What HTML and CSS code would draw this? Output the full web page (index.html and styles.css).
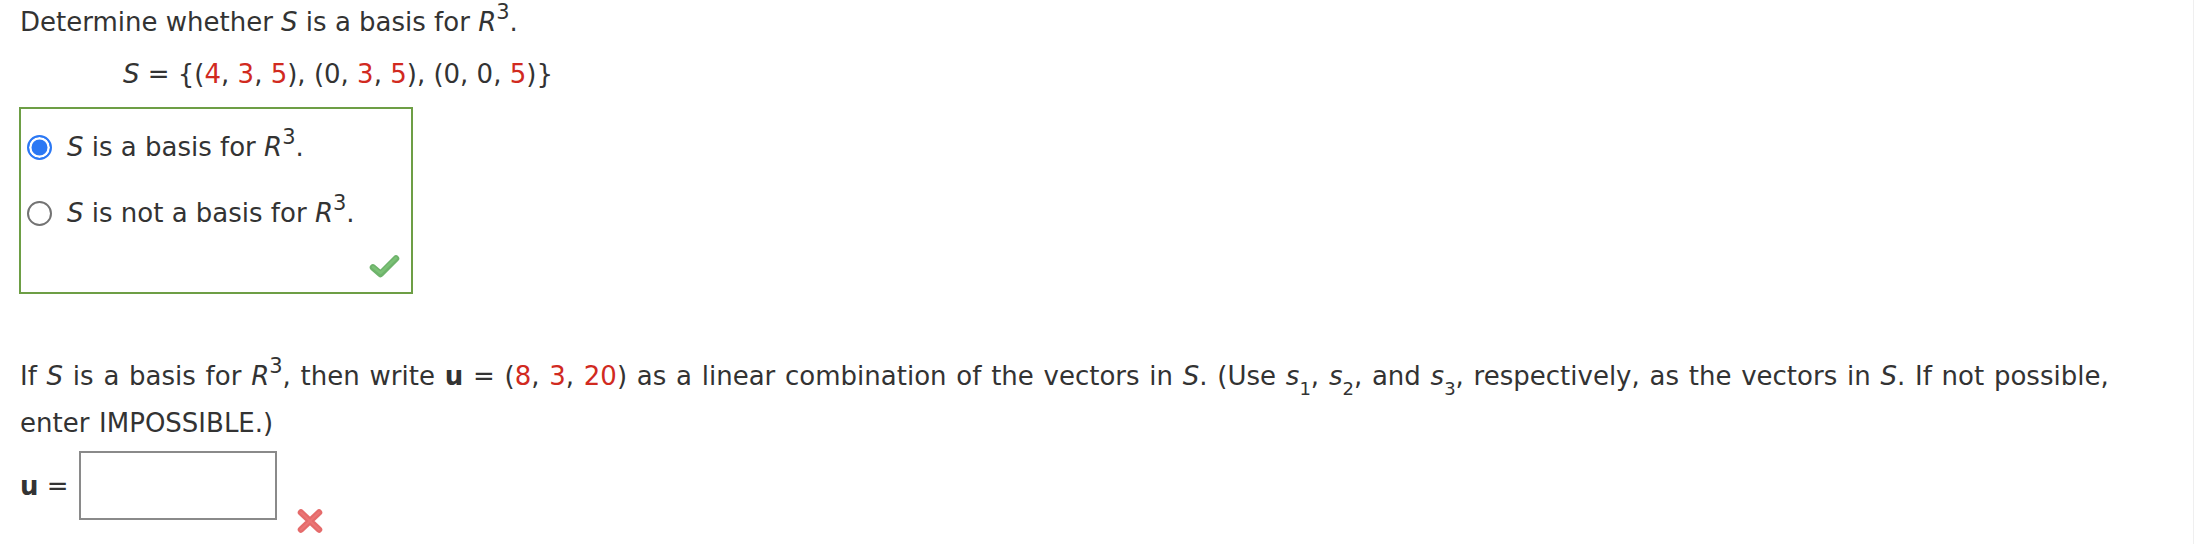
FILE: index.html
```html
<!DOCTYPE html>
<html>
<head>
<meta charset="utf-8">
<link rel="stylesheet" href="styles.css">
</head>
<body>
<div class="question">
  <p class="title">Determine whether <i>S</i> is a basis for <i>R</i><sup>3</sup>.</p>
  <p class="set"><i>S</i> = {(<span class="red">4</span>, <span class="red">3</span>, <span class="red">5</span>), (0, <span class="red">3</span>, <span class="red">5</span>), (0, 0, <span class="red">5</span>)}</p>
  <div class="answer-box">
    <div class="option">
      <span class="radio checked"></span>
      <span class="opt-text"><i>S</i> is a basis for <i>R</i><sup>3</sup>.</span>
    </div>
    <div class="option">
      <span class="radio"></span>
      <span class="opt-text"><i>S</i> is not a basis for <i>R</i><sup>3</sup>.</span>
    </div>
    <div class="mark-row">
      <svg class="check" width="31" height="24" viewBox="0 0 31 24">
        <path d="M4 13.5 L11.5 20 L27 4.5" fill="none" stroke="#5aa956" stroke-width="6.5" stroke-linecap="round" stroke-linejoin="round" opacity="0.88"/>
        <path d="M4 13 L11.5 19 L27 4" fill="none" stroke="#80c77a" stroke-width="2.5" stroke-linecap="round" stroke-linejoin="round" opacity="0.7"/>
      </svg>
    </div>
  </div>
  <p class="q2">If <i>S</i> is a basis for <i>R</i><sup>3</sup>, then write <b>u</b> = (<span class="red">8</span>, <span class="red">3</span>, <span class="red">20</span>) as a linear combination of the vectors in <i>S</i>. (Use <i>s</i><sub>1</sub>, <i>s</i><sub>2</sub>, and <i>s</i><sub>3</sub>, respectively, as the vectors in <i>S</i>. If not possible, enter IMPOSSIBLE.)</p>
  <div class="u-row">
    <span class="u-label"><b>u</b> =</span>
    <span class="input"></span>
    <svg class="cross" width="28" height="26" viewBox="0 0 28 26">
      <path d="M5 4.5 L23 21.5 M23 4.5 L5 21.5" fill="none" stroke="#e25b5b" stroke-width="6.5" stroke-linecap="round" opacity="0.9"/>
      <path d="M5 4.5 L23 21.5 M23 4.5 L5 21.5" fill="none" stroke="#ef7d7d" stroke-width="2" stroke-linecap="round" opacity="0.6"/>
    </svg>
  </div>
</div>
</body>
</html>
```

FILE: styles.css
```css
html, body {
  margin: 0;
  padding: 0;
  background: #ffffff;
}

.question {
  box-sizing: border-box;
  width: 2194px;
  height: 544px;
  padding-left: 20px;
  border-right: 1px solid #efefef;
  font-family: "DejaVu Sans", Verdana, sans-serif;
  font-size: 26px;
  color: #333333;
}

p {
  margin: 0;
}

i {
  font-style: italic;
}

sup {
  font-size: 21px;
  line-height: 0;
  vertical-align: 12px;
}

sub {
  font-size: 18px;
  line-height: 0;
  vertical-align: -10px;
}

.red {
  color: #d12a1f;
}

.title {
  line-height: 44px;
}

.set {
  margin-top: 8px;
  margin-left: 103px;
  line-height: 44px;
}

.answer-box {
  margin-top: 11px;
  margin-left: -1px;
  width: 390px;
  border: 2px solid #6d9e45;
  padding: 5px 0 14px 0;
}

.option {
  display: flex;
  align-items: center;
  height: 66px;
}

.radio {
  flex: none;
  width: 25px;
  height: 25px;
  box-sizing: border-box;
  border-radius: 50%;
  border: 2px solid #737373;
  background: #ffffff;
  margin-left: 6px;
  margin-right: 15px;
}

.radio.checked {
  border: 2.5px solid #2b78f4;
  background: #2b78f4;
  box-shadow: inset 0 0 0 2.5px #ffffff;
}

.opt-text {
  line-height: 66px;
}

.mark-row {
  display: flex;
  justify-content: flex-end;
  padding-right: 11px;
  margin-top: 8px;
  height: 24px;
}

.check {
  display: block;
}

.q2 {
  margin-top: 59px;
  line-height: 47px;
  width: 2150px;
  word-spacing: 1.5px;
}

.u-row {
  display: flex;
  align-items: flex-start;
  margin-top: 4px;
}

.u-label {
  line-height: 69px;
  margin-top: 1px;
  white-space: nowrap;
}

.u-label b {
  font-weight: bold;
}

.input {
  display: block;
  width: 198px;
  height: 69px;
  box-sizing: border-box;
  border: 2px solid #8a8a8a;
  background: #ffffff;
  margin-left: 10px;
}

.cross {
  display: block;
  margin-left: 19px;
  margin-top: 57px;
}
```
